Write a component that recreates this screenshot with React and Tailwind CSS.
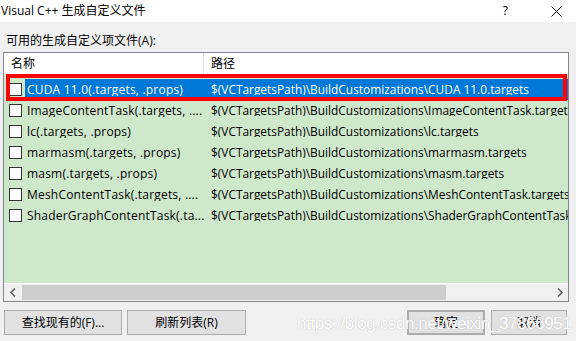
import React from 'react';

const font = { fontFamily: '"Open Sans", "Noto Sans CJK SC", sans-serif' };

const rows = [
  { name: 'CUDA 11.0(.targets, .props)', path: '$(VCTargetsPath)\\BuildCustomizations\\CUDA 11.0.targets', selected: true },
  { name: 'ImageContentTask(.targets, ....', path: '$(VCTargetsPath)\\BuildCustomizations\\ImageContentTask.targets' },
  { name: 'lc(.targets, .props)', path: '$(VCTargetsPath)\\BuildCustomizations\\lc.targets' },
  { name: 'marmasm(.targets, .props)', path: '$(VCTargetsPath)\\BuildCustomizations\\marmasm.targets' },
  { name: 'masm(.targets, .props)', path: '$(VCTargetsPath)\\BuildCustomizations\\masm.targets' },
  { name: 'MeshContentTask(.targets, ....', path: '$(VCTargetsPath)\\BuildCustomizations\\MeshContentTask.targets' },
  { name: 'ShaderGraphContentTask(.ta...', path: '$(VCTargetsPath)\\BuildCustomizations\\ShaderGraphContentTask.targets' },
];

const Checkbox = () => (
  <div className="w-[13px] h-[13px] shrink-0 border border-[#333333] bg-white" />
);

const Button = ({ children, className = '' }) => (
  <div
    className={`h-[25px] flex items-center justify-center bg-[#e1e1e1] border border-[#adadad] text-[12px] text-black ${className}`}
  >
    {children}
  </div>
);

export default function App() {
  return (
    <div className="relative w-[576px] h-[341px] bg-[#f0f0f0] overflow-hidden text-black" style={font}>
      {/* Title bar */}
      <div className="h-[22px] bg-white flex items-center text-[12px] leading-none">
        <span className="pl-[1px]">Visual C++ 生成自定义文件</span>
        <span className="ml-auto mr-[43px] text-[12px]">?</span>
        <svg className="mr-[14px]" width="11" height="11" viewBox="0 0 11 11">
          <path d="M0.5 0.5 L10.5 10.5 M10.5 0.5 L0.5 10.5" stroke="#000" strokeWidth="1" fill="none" />
        </svg>
      </div>

      {/* Label */}
      <div className="h-[30px] pt-[8px] pl-[6px] flex items-center text-[12px] leading-none">
        可用的生成自定义项文件(A):
      </div>

      {/* List view */}
      <div className="ml-[3px] w-[566px] h-[250px] border border-[#828790] bg-[#cfe8cc] flex flex-col text-[12px] leading-none">
        <div className="h-[21px] shrink-0 bg-white flex items-center">
          <div className="w-[200px] h-full pl-[7px] flex items-center border-r border-[#e5e5e5]">名称</div>
          <div className="pl-[7px]">路径</div>
        </div>
        <div className="h-[5px] shrink-0" />
        {rows.map((row, i) => (
          <div key={i} className="h-[21px] shrink-0 flex items-center whitespace-nowrap overflow-hidden">
            <div className="w-[21px] h-full flex items-center pl-[5px] shrink-0">
              <Checkbox />
            </div>
            <div
              className={`flex-1 h-full flex items-center overflow-hidden ${row.selected ? 'bg-[#0078d7] text-white' : ''}`}
            >
              <div className="w-[179px] shrink-0 pl-[2px] overflow-hidden tracking-[0.2px]">{row.name}</div>
              <div className="pl-[7px] overflow-hidden text-[11.9px]">{row.path}</div>
            </div>
          </div>
        ))}
        <div className="flex-1" />
        <div className="h-px shrink-0 bg-white" />
        <div className="h-[17px] shrink-0 bg-[#f0f0f0] flex items-center">
          <div className="w-[17px] h-full flex items-center justify-center">
            <svg width="6" height="9" viewBox="0 0 6 9">
              <path d="M5 0.5 L1 4.5 L5 8.5" stroke="#606060" strokeWidth="1.6" fill="none" />
            </svg>
          </div>
          <div className="flex-1 h-full flex items-center">
            <div className="w-[424px] h-[15px] ml-px bg-[#cdcdcd]" />
          </div>
          <div className="w-[17px] h-full flex items-center justify-center">
            <svg width="6" height="9" viewBox="0 0 6 9">
              <path d="M1 0.5 L5 4.5 L1 8.5" stroke="#606060" strokeWidth="1.6" fill="none" />
            </svg>
          </div>
        </div>
      </div>

      {/* Buttons */}
      <div className="mt-[8px] flex items-center">
        <Button className="ml-[4px] w-[118px]">查找现有的(F)...</Button>
        <Button className="ml-[5px] w-[119px]">刷新列表(R)</Button>
        <Button className="ml-[161px] w-[78px] border-2 border-[#0078d7]">确定</Button>
        <Button className="ml-[6px] w-[76px]">取消</Button>
      </div>

      {/* Red annotation box */}
      <div className="absolute left-[6px] top-[74px] w-[561px] h-[27px] border-4 border-[#ff0000]" />

      {/* Watermark */}
      <div
        className="absolute left-[297px] top-[315px] text-[17px] leading-none tracking-[-0.4px] text-white whitespace-nowrap"
        style={{
          fontFamily: '"Liberation Sans", sans-serif',
          textShadow: '0 0 1px #b0b0b0',
        }}
      >
        https://blog.csdn.net/weixin_37866951
      </div>
    </div>
  );
}
